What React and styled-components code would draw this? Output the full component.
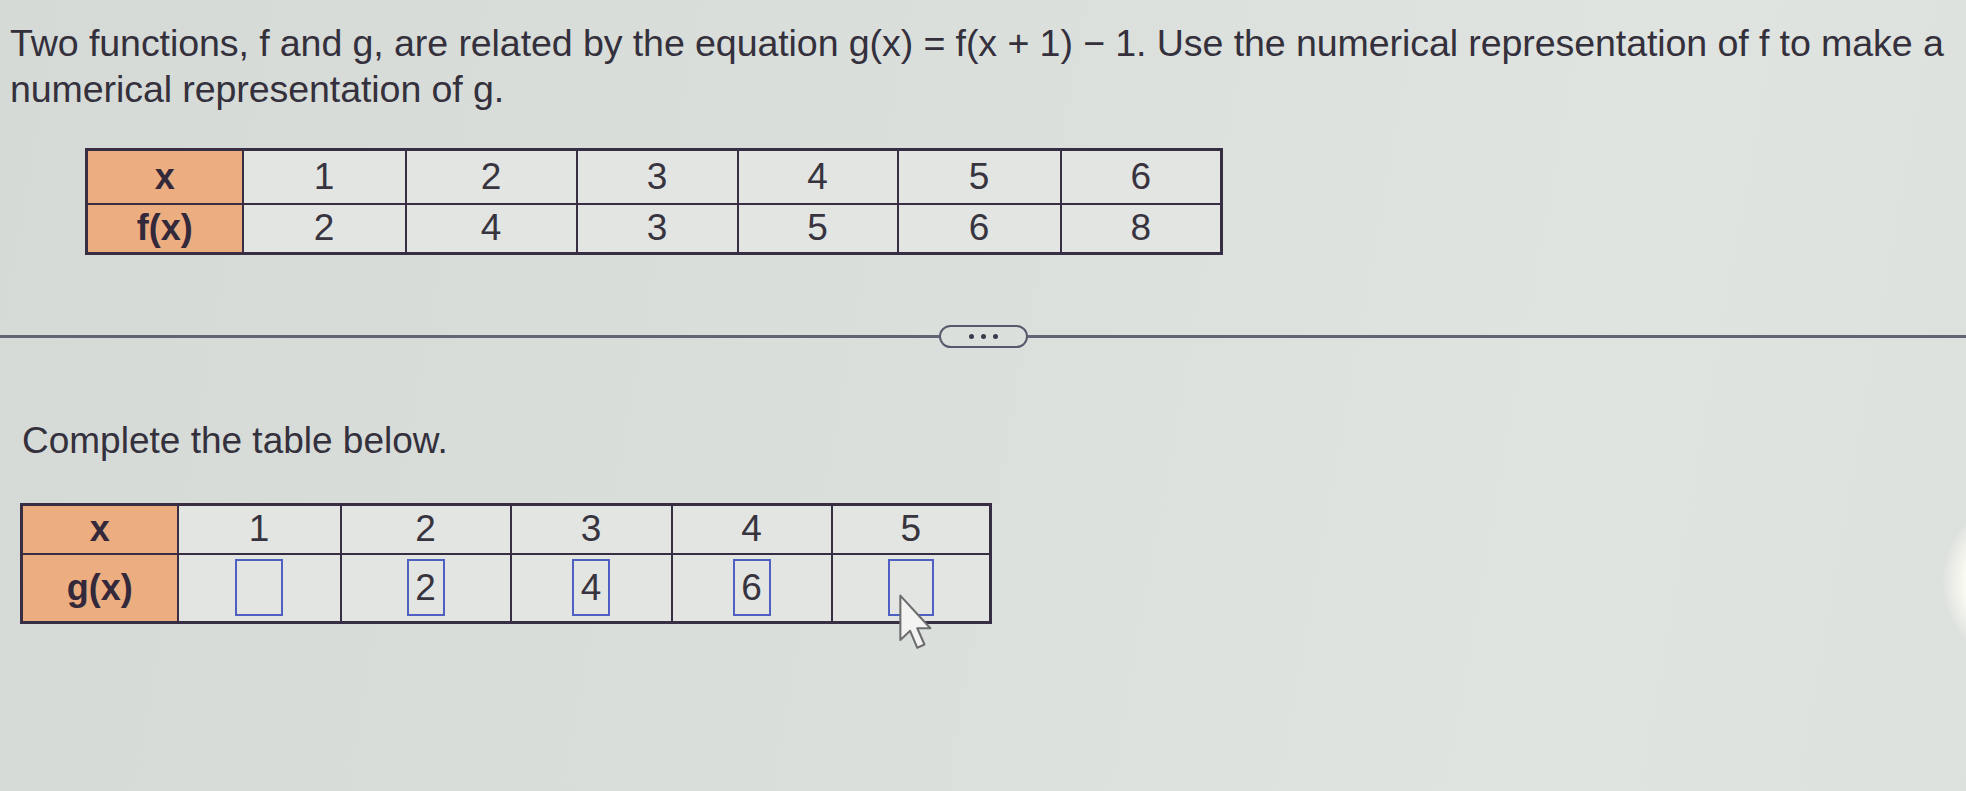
import styled, { createGlobalStyle } from "styled-components";

const GlobalStyle = createGlobalStyle`
  html, body {
    margin: 0;
    padding: 0;
  }
  body {
    width: 1966px;
    min-height: 791px;
    font-family: "Liberation Sans", Arial, sans-serif;
    color: #34303c;
    background:
      radial-gradient(ellipse 58px 74px at 2000px 582px, rgba(255, 255, 248, 1) 0%, rgba(252, 252, 242, 0.95) 60%, rgba(230, 233, 228, 0) 100%),
      linear-gradient(100deg, #d5dad7 0%, #dadfdc 45%, #e0e4e1 80%, #dde1de 100%);
  }
`;

const Page = styled.div`
  padding: 20px 0 0 0;
  display: flex;
  flex-direction: column;
  align-items: flex-start;
`;

const Prompt = styled.p`
  margin: 0;
  padding: 0 0 0 10px;
  width: 1956px;
  font-size: 37.6px;
  line-height: 46px;
  letter-spacing: -0.1px;
`;

const Instruction = styled.p`
  margin: 71px 0 0 0;
  padding-left: 22px;
  font-size: 37px;
  line-height: 46px;
`;

const Table = styled.table`
  border-collapse: collapse;
  table-layout: fixed;
  width: ${(p) => p.$width}px;
  margin: ${(p) => p.$top}px 0 0 ${(p) => p.$left}px;
  border: 3px solid #382e44;
`;

const Col = styled.col`
  width: ${(p) => p.$w}px;
`;

const Row = styled.tr`
  height: ${(p) => p.$h}px;
`;

const HeadCell = styled.th`
  background: #ecae81;
  border: 2px solid #382e44;
  font-weight: 700;
  font-size: 36px;
  color: #33293b;
  text-align: center;
  padding: 0;
`;

const Cell = styled.td`
  position: relative;
  background: #e3e5e2;
  border: 2px solid #382e44;
  font-size: 37px;
  color: #37343f;
  text-align: center;
  padding: 0;
`;

const AnswerBox = styled.span`
  display: inline-flex;
  align-items: center;
  justify-content: center;
  box-sizing: border-box;
  width: ${(p) => p.$w}px;
  height: 57px;
  border: 2.5px solid #4f5fc2;
  vertical-align: middle;
  font-size: 37px;
  color: #37343f;
`;

const Divider = styled.div`
  align-self: stretch;
  margin-top: 70px;
  display: flex;
  align-items: center;
  height: 22px;
`;

const Rule = styled.div`
  flex: 1;
  height: 3px;
  background: #626476;
`;

const Pill = styled.div`
  box-sizing: border-box;
  width: 89px;
  height: 23px;
  border: 2.5px solid #575a6c;
  border-radius: 12px;
  display: flex;
  align-items: center;
  justify-content: center;
  gap: 7px;
`;

const Dot = styled.span`
  width: 5px;
  height: 5px;
  border-radius: 50%;
  background: #3a3c4c;
`;

const Pointer = styled.svg`
  position: absolute;
  left: 64px;
  top: 38px;
  width: 38px;
  height: 60px;
  pointer-events: none;
`;

const fTop = [
  { x: 1, y: 2, w: 163 },
  { x: 2, y: 4, w: 171 },
  { x: 3, y: 3, w: 161 },
  { x: 4, y: 5, w: 160 },
  { x: 5, y: 6, w: 163 },
  { x: 6, y: 8, w: 161 },
];

const gRows = [
  { x: 1, v: "", box: 48, w: 163 },
  { x: 2, v: "2", box: 38, w: 170 },
  { x: 3, v: "4", box: 38, w: 161 },
  { x: 4, v: "6", box: 38, w: 160 },
  { x: 5, v: "", box: 46, w: 159, cursor: true },
];

const HEAD_W = 156;
const total = (cols) => cols.reduce((s, c) => s + c.w, HEAD_W);

const Cursor = () => (
  <Pointer viewBox="0 0 28 46">
    <path
      d="M2 2 L2 36 L9.5 29 L15 42 L20.5 39.5 L15 27 L25 27 Z"
      fill="#f3f3f1"
      stroke="#6d6d70"
      strokeWidth="1.6"
      strokeLinejoin="round"
    />
  </Pointer>
);

export default function App() {
  return (
    <>
      <GlobalStyle />
      <Page>
        <Prompt>
          Two functions, f and g, are related by the equation g(x) = f(x + 1) − 1. Use the numerical representation of f to make a numerical representation of g.
        </Prompt>

        <Table $top={36} $left={85} $width={total(fTop)}>
          <colgroup>
            <Col $w={HEAD_W} />
            {fTop.map((c) => (
              <Col key={c.x} $w={c.w} />
            ))}
          </colgroup>
          <tbody>
            <Row $h={54}>
              <HeadCell>x</HeadCell>
              {fTop.map((c) => (
                <Cell key={c.x}>{c.x}</Cell>
              ))}
            </Row>
            <Row $h={50}>
              <HeadCell>f(x)</HeadCell>
              {fTop.map((c) => (
                <Cell key={c.x}>{c.y}</Cell>
              ))}
            </Row>
          </tbody>
        </Table>

        <Divider>
          <Rule />
          <Pill>
            <Dot />
            <Dot />
            <Dot />
          </Pill>
          <Rule />
        </Divider>

        <Instruction>Complete the table below.</Instruction>

        <Table $top={39} $left={20} $width={total(gRows)}>
          <colgroup>
            <Col $w={HEAD_W} />
            {gRows.map((c) => (
              <Col key={c.x} $w={c.w} />
            ))}
          </colgroup>
          <tbody>
            <Row $h={49}>
              <HeadCell>x</HeadCell>
              {gRows.map((c) => (
                <Cell key={c.x}>{c.x}</Cell>
              ))}
            </Row>
            <Row $h={69}>
              <HeadCell>g(x)</HeadCell>
              {gRows.map((c) => (
                <Cell key={c.x}>
                  <AnswerBox $w={c.box}>{c.v}</AnswerBox>
                  {c.cursor && <Cursor />}
                </Cell>
              ))}
            </Row>
          </tbody>
        </Table>
      </Page>
    </>
  );
}
